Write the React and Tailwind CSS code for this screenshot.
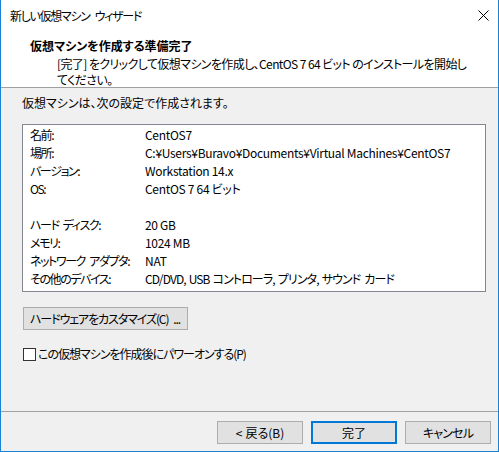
import React from "react";

function Sp({ w = "w-[4px]" }) {
  return <span className={"inline-block " + w} />;
}

const rows = [
  [<>名前:</>, <>CentOS7</>, "tracking-[-0.3px]"],
  [<>場所:</>, <>C:¥Users¥Buravo¥Documents¥Virtual Machines¥CentOS7</>, "tracking-[-0.3px]"],
  [<>バージョン:</>, <>Workstation 14.x</>, "tracking-[-0.3px]"],
  [<>OS:</>, <>CentOS 7 64 ビット</>, "tracking-[-0.3px]"],
  null,
  [<>ハード<Sp />ディスク:</>, <>20 GB</>, "tracking-[-0.3px]"],
  [<>メモリ:</>, <>1024 MB</>, "tracking-[-0.3px]"],
  [<>ネットワーク<Sp />アダプタ:</>, <>NAT</>, "tracking-[-0.3px]"],
  [<>その他のデバイス:</>, <>CD/DVD,<Sp w="w-[3px]" />USB<Sp w="w-[3px]" />コントローラ,<Sp w="w-[3px]" />プリンタ,<Sp w="w-[3px]" />サウンド<Sp />カード</>, "tracking-[-0.9px]"],
];

export default function App() {
  return (
    <div
      className="w-[499px] h-[452px] bg-[#f0f0f0] border-l border-r border-b border-[#1883d7] flex flex-col text-[12px] text-black [font-feature-settings:'palt'] overflow-hidden whitespace-nowrap"
      style={{ fontFamily: "'Noto Sans CJK JP', 'Noto Sans', sans-serif" }}
    >
      {/* Title + header (white) */}
      <div className="bg-white h-[88px] border-b border-[#a0a0a0] flex flex-col shrink-0">
        <div className="h-[30px] flex items-center justify-between pl-[9px] pr-[9px] shrink-0">
          <span className="leading-[16px] pt-[2px] tracking-[-1.3px]">新しい仮想マシン<Sp w="w-[5px]" />ウィザード</span>
          <svg width="11" height="11" viewBox="0 0 11 11" className="mt-[1px]">
            <path d="M0.5 0.5 L10.5 10.5 M10.5 0.5 L0.5 10.5" stroke="#000" strokeWidth="1" fill="none" />
          </svg>
        </div>
        <div className="pt-[8px] pl-[29px]">
          <div className="font-bold leading-[16px]">仮想マシンを作成する準備完了</div>
          <div className="pl-[27px] pt-[2px] tracking-[-0.6px]">
            <div className="h-[15px] leading-[15px]">[完了] をクリックして仮想マシンを作成し、CentOS 7 64 ビット のインストールを開始し</div>
            <div className="h-[16px] leading-[16px] pt-[1px]">てください。</div>
          </div>
        </div>
      </div>

      {/* Body */}
      <div className="h-[323px] shrink-0 pl-[21px] pt-[7px] flex flex-col">
        <div className="leading-[16px]">仮想マシンは、次の設定で作成されます。</div>
        <div className="mt-[13px] w-[464px] h-[168px] bg-white border border-[#828790] pt-[1px] pl-[7px]">
          {rows.map((r, i) =>
            r ? (
              <div key={i} className="flex h-[18px] items-center">
                <div className="w-[115px] shrink-0 tracking-[-1.4px]">{r[0]}</div>
                <div className={r[2]}>{r[1]}</div>
              </div>
            ) : (
              <div key={i} className="h-[18px]" />
            )
          )}
        </div>
        <div className="mt-[15px] ml-[1px]">
          <button className="w-[165px] h-[23px] bg-[#e1e1e1] border border-[#adadad] text-left pl-[6px] leading-[16px] tracking-[-1.1px]">
            ハードウェアをカスタマイズ(C)<Sp w="w-[5px]" />...
          </button>
        </div>
        <label className="mt-[17px] ml-[1px] flex items-center gap-[1px] h-[14px]">
          <span className="w-[13px] h-[13px] border border-[#333333] bg-white shrink-0" />
          <span className="leading-[16px] pl-[1px] tracking-[-1px]">この仮想マシンを作成後にパワーオンする(P)</span>
        </label>
      </div>

      {/* Footer */}
      <div className="h-[40px] border-t border-[#a0a0a0] flex justify-end items-start pt-[9px] pr-[7px] gap-[8px] shrink-0">
        <button className="w-[86px] h-[23px] bg-[#e1e1e1] border border-[#adadad] leading-[16px]">
          &lt;<Sp w="w-[3px]" />戻る(B)
        </button>
        <button className="w-[86px] h-[23px] bg-[#e1e1e1] border-2 border-[#0078d7] leading-[16px]">
          完了
        </button>
        <button className="w-[86px] h-[23px] bg-[#e1e1e1] border border-[#adadad] leading-[16px] tracking-[-0.8px]">
          キャンセル
        </button>
      </div>
    </div>
  );
}
